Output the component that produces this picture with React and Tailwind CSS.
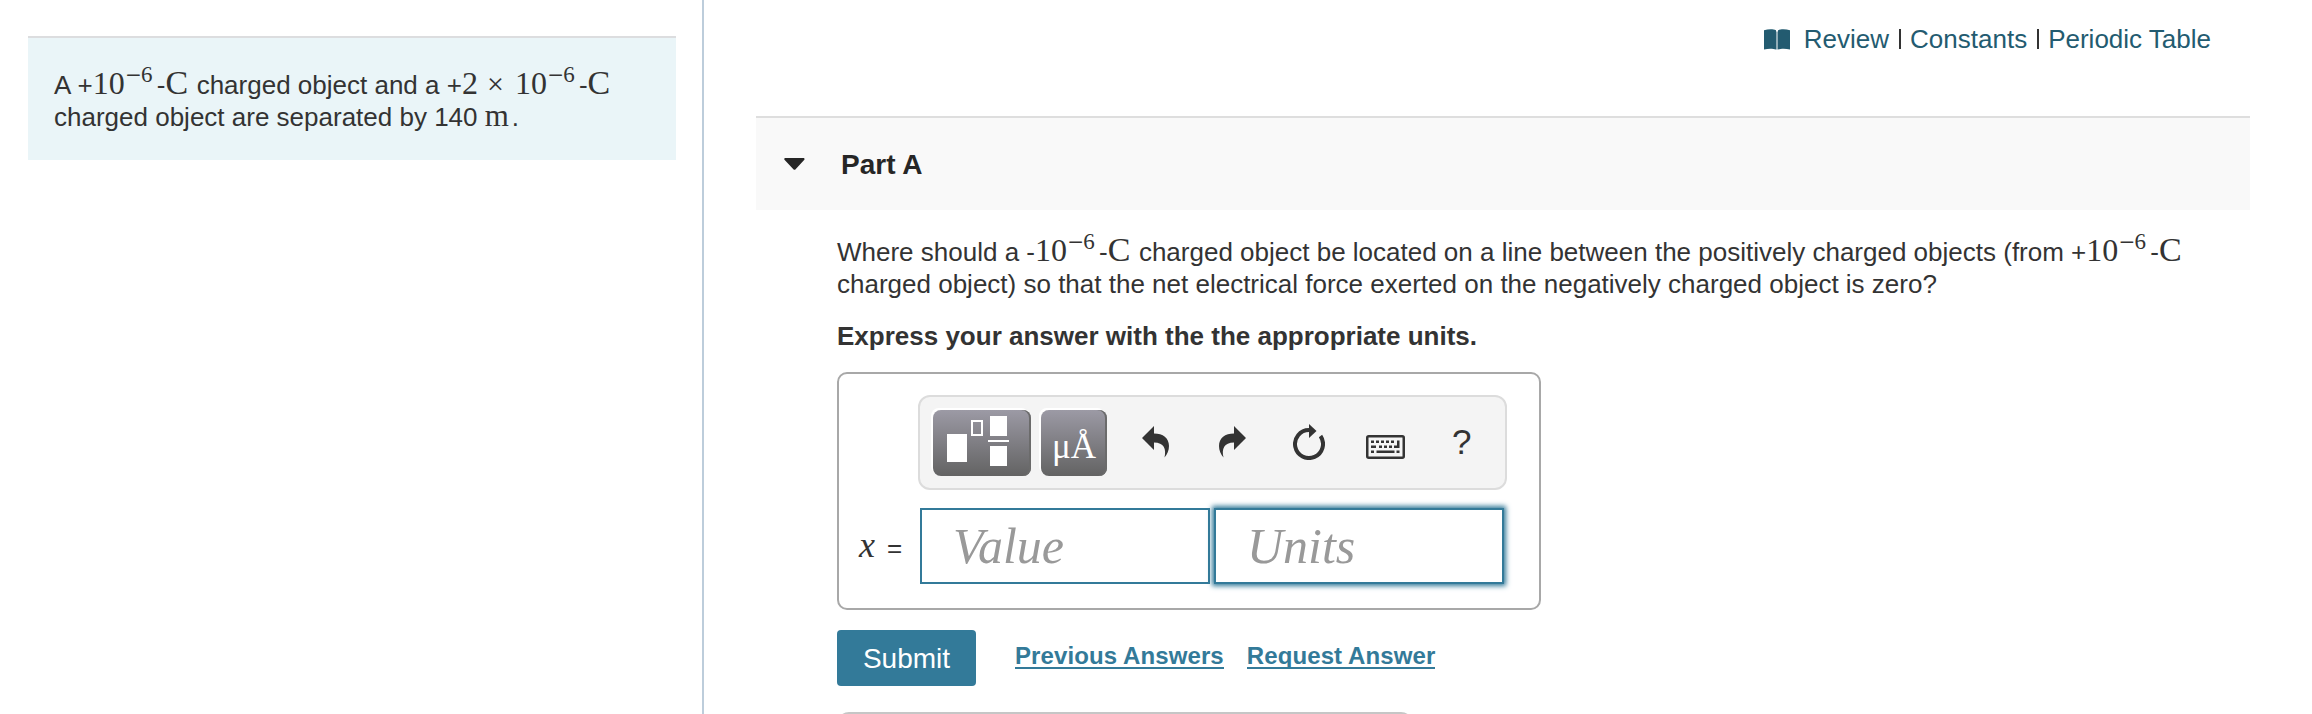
import { useState } from "react";

function App() {
    const [open, setOpen] = useState(true);

    return (
        <div className="flex h-[714px] w-[2312px] overflow-hidden bg-white font-['Liberation_Sans',Arial,sans-serif] text-[26px] leading-8 text-[#333]">
            <aside className="w-[704px] shrink-0 border-r-2 border-[#bdcddb] pl-7 pt-9">
                <div className="h-[124px] w-[648px] border-t-2 border-[#dcdddf] bg-[#eaf5f8] pl-[26px] pt-[31px]">
                    <p className="whitespace-nowrap">
                        <span className="-mr-px">A</span> +<Power />-<Unit /> charged object and a +
                        <span className="inline-block w-[53px] whitespace-nowrap font-['Liberation_Serif',serif] text-[32px] leading-0">
                            <span className="inline-block w-[25px]">2</span>
                            <span className="text-[30px]">×</span>
                        </span>
                        <Power />-<Unit />
                        <br />
                        charged object are separated by 140{" "}
                        <span className="inline-block w-[27px] font-['Liberation_Serif',serif] text-[31px] leading-0">m</span>.
                    </p>
                </div>
            </aside>

            <main className="w-[1546px] shrink-0 pl-[52px]">
                <nav className="mt-[23px] flex h-8 items-center justify-end pr-[39px] text-[#235b70]">
                    <BookIcon />
                    <a className="ml-[14px]">Review</a>
                    <Separator />
                    <a>Constants</a>
                    <Separator />
                    <a>Periodic Table</a>
                </nav>

                <button
                    type="button"
                    onClick={() => setOpen(!open)}
                    className="mt-[61px] flex h-[94px] w-full items-center border-t-2 border-[#dedede] bg-[#f9f9f9] pl-7 text-[28px] font-bold text-[#262626]"
                >
                    <svg width="21" height="12" viewBox="0 0 21 12" fill="#262626">
                        <path d="M1.6 0h17.6c1.4 0 1.8 1.2.9 2L11.6 11.2c-.7.7-1.5.7-2.2 0L.7 2C-.2 1.2.2 0 1.6 0z" />
                    </svg>
                    <span className="ml-[36px] mt-[2px]">Part A</span>
                </button>

                {open && (
                    <section className="pl-[81px]">
                        <p className="mt-[26px] whitespace-nowrap">
                            Where should a -<Power />-<Unit /> charged object be located on a line between the positively
                            charged objects (from +<Power />-<Unit />
                            <br />
                            charged object) so that the net electrical force exerted on the negatively charged object is zero?
                        </p>
                        <p className="mt-5 font-bold">Express your answer with the the appropriate units.</p>

                        <AnswerBox />

                        <div className="mt-5 flex h-14 items-center">
                            <button type="button" className="h-14 w-[139px] rounded-[4px] bg-[#337a99] pt-px text-[28px] text-white">
                                Submit
                            </button>
                            <AnswerLink className="ml-[39px]">Previous Answers</AnswerLink>
                            <AnswerLink className="ml-[23px]">Request Answer</AnswerLink>
                        </div>

                        <div className="mt-[26px] h-10 w-[576px] rounded-[12px] border-2 border-[#c6c6c6]" />
                    </section>
                )}
            </main>
        </div>
    );
}

function AnswerBox() {
    return (
        <div className="mt-5 h-[238px] w-[704px] rounded-[10px] border-2 border-[#a8a8a8] pt-[21px]">
            <div className="ml-[79px] flex h-[95px] w-[589px] items-center rounded-[12px] border-2 border-[#dcdcdc] bg-[#f4f4f4] pl-[13px]">
                <ToolButton className="w-[98px] pb-1 pr-2">
                    <TemplateIcon />
                </ToolButton>
                <ToolButton className="ml-[10px] w-[66px]">
                    <span className="block translate-y-[4px] font-['Liberation_Serif',serif] text-[35px] leading-none">μÅ</span>
                </ToolButton>
                <UndoIcon className="-mt-[2px] ml-[35px]" />
                <UndoIcon className="-mt-[2px] ml-[50px] -scale-x-100" />
                <ResetIcon />
                <KeyboardIcon />
                <span className="-mt-[2px] ml-[47px] text-[35px]">?</span>
            </div>

            <div className="mt-[18px] flex items-center">
                <div className="flex w-[81px] items-baseline pl-[20px]">
                    <span className="inline-block w-[28px] font-['Liberation_Serif',serif] text-[36px] italic">x</span>
                    <span>=</span>
                </div>
                <Field placeholder="Value" />
                <Field placeholder="Units" className="ml-1 shadow-[0_0_5px_2px_#337a99]" />
            </div>
        </div>
    );
}

function Field({ placeholder, className = "" }) {
    return (
        <div className={`h-[76px] w-[290px] border-2 border-[#337a99] bg-white pl-[31px] ${className}`}>
            <span className="inline-block origin-left scale-x-[0.98] font-['Liberation_Serif',serif] text-[51px] italic leading-[72px] text-[#999]">
                {placeholder}
            </span>
        </div>
    );
}

function ToolButton({ className = "", children }) {
    return (
        <button
            type="button"
            className={`flex h-[66px] items-center justify-center rounded-[8px] bg-linear-to-b from-[#9c9aa5] to-[#636363] text-white shadow-[-2px_-2px_0_#fff,inset_-2px_0_0_#6b6b6b] ${className}`}
        >
            {children}
        </button>
    );
}

function AnswerLink({ className = "", children }) {
    return (
        <a className={`-mt-[3px] border-b-2 border-[#337a99] text-[24px] font-bold leading-[22px] tracking-[0.1px] text-[#337a99] ${className}`}>
            {children}
        </a>
    );
}

// 10 to the minus 6
function Power() {
    return (
        <span className="inline-block w-[64px] whitespace-nowrap font-['Liberation_Serif',serif] text-[32px] leading-0">
            10<span className="ml-px align-[10px] text-[27px]">−</span>
            <span className="align-[12px] text-[23px]">6</span>
        </span>
    );
}

function Unit() {
    return <span className="inline-block w-[24px] font-['Liberation_Serif',serif] text-[34px] leading-0">C</span>;
}

function Separator() {
    return <span className="ml-[10px] mr-[9px] h-[20px] w-[2px] bg-[#333]" />;
}

function BookIcon() {
    return (
        <svg width="26" height="21" viewBox="0 0 26 21" fill="#235b70">
            <path d="M0 1.2C4 .2 9 0 12 1.200V20.500C9 19.500 4 19.500 0 20.500z" />
            <path d="M26 1.200C22 .2 17 0 14 1.200V20.500C17 19.500 22 19.500 26 20.500z" />
            <path d="M12 2.500h2v18h-2z" opacity=".5" />
        </svg>
    );
}

function TemplateIcon() {
    return (
        <svg width="62" height="50" viewBox="0 0 62 50" fill="#fff">
            <rect x="0" y="18" width="20" height="28" />
            <rect x="25" y="5" width="10" height="14" fill="none" stroke="#fff" strokeWidth="2" />
            <rect x="43" y="0" width="17" height="20" />
            <rect x="41" y="24" width="21" height="2" />
            <rect x="43" y="30" width="17" height="20" />
        </svg>
    );
}

function UndoIcon({ className = "" }) {
    return (
        <svg className={className} width="27" height="32" viewBox="0 0 27 32" fill="#333">
            <path d="M0 12L12 0v7.500C21 7.500 27 12 27 20c0 4.500-1.800 8.500-4.500 11.500C24.500 23 22 16.500 12 16.500V24z" />
        </svg>
    );
}

function ResetIcon() {
    return (
        <svg className="-mt-[1px] ml-[47px]" width="32" height="36" viewBox="0 0 32 36" fill="none">
            <path d="M16 6A14 14 0 1 0 27.500 12" stroke="#333" strokeWidth="4" />
            <path d="M16 0l7.500 7L16 14z" fill="#333" />
        </svg>
    );
}

function KeyboardIcon() {
    return (
        <svg className="ml-[41px] mt-[9px]" width="39" height="24" viewBox="0 0 39 24" fill="#333">
            <rect x="1.250" y="1.250" width="36.500" height="21.500" rx="1.500" fill="none" stroke="#333" strokeWidth="2.500" />
            <path d="M5 5.500h3v2.500H5zM10 5.500h3v2.500h-3zM15 5.500h3v2.500h-3zM20 5.500h3v2.500h-3zM25 5.500h3v2.500h-3z" />
            <path d="M5 10.500h5v2.500H5zM13 10.500h3v2.500h-3zM18 10.500h3v2.500h-3zM23 10.500h3v2.500h-3zM31 5.500h2.500V13H28v-2.500h3z" />
            <path d="M5 15.500h3V18H5zM10.500 15.500h18V18h-18zM30.500 15.500h3V18h-3z" />
        </svg>
    );
}

export default App;
